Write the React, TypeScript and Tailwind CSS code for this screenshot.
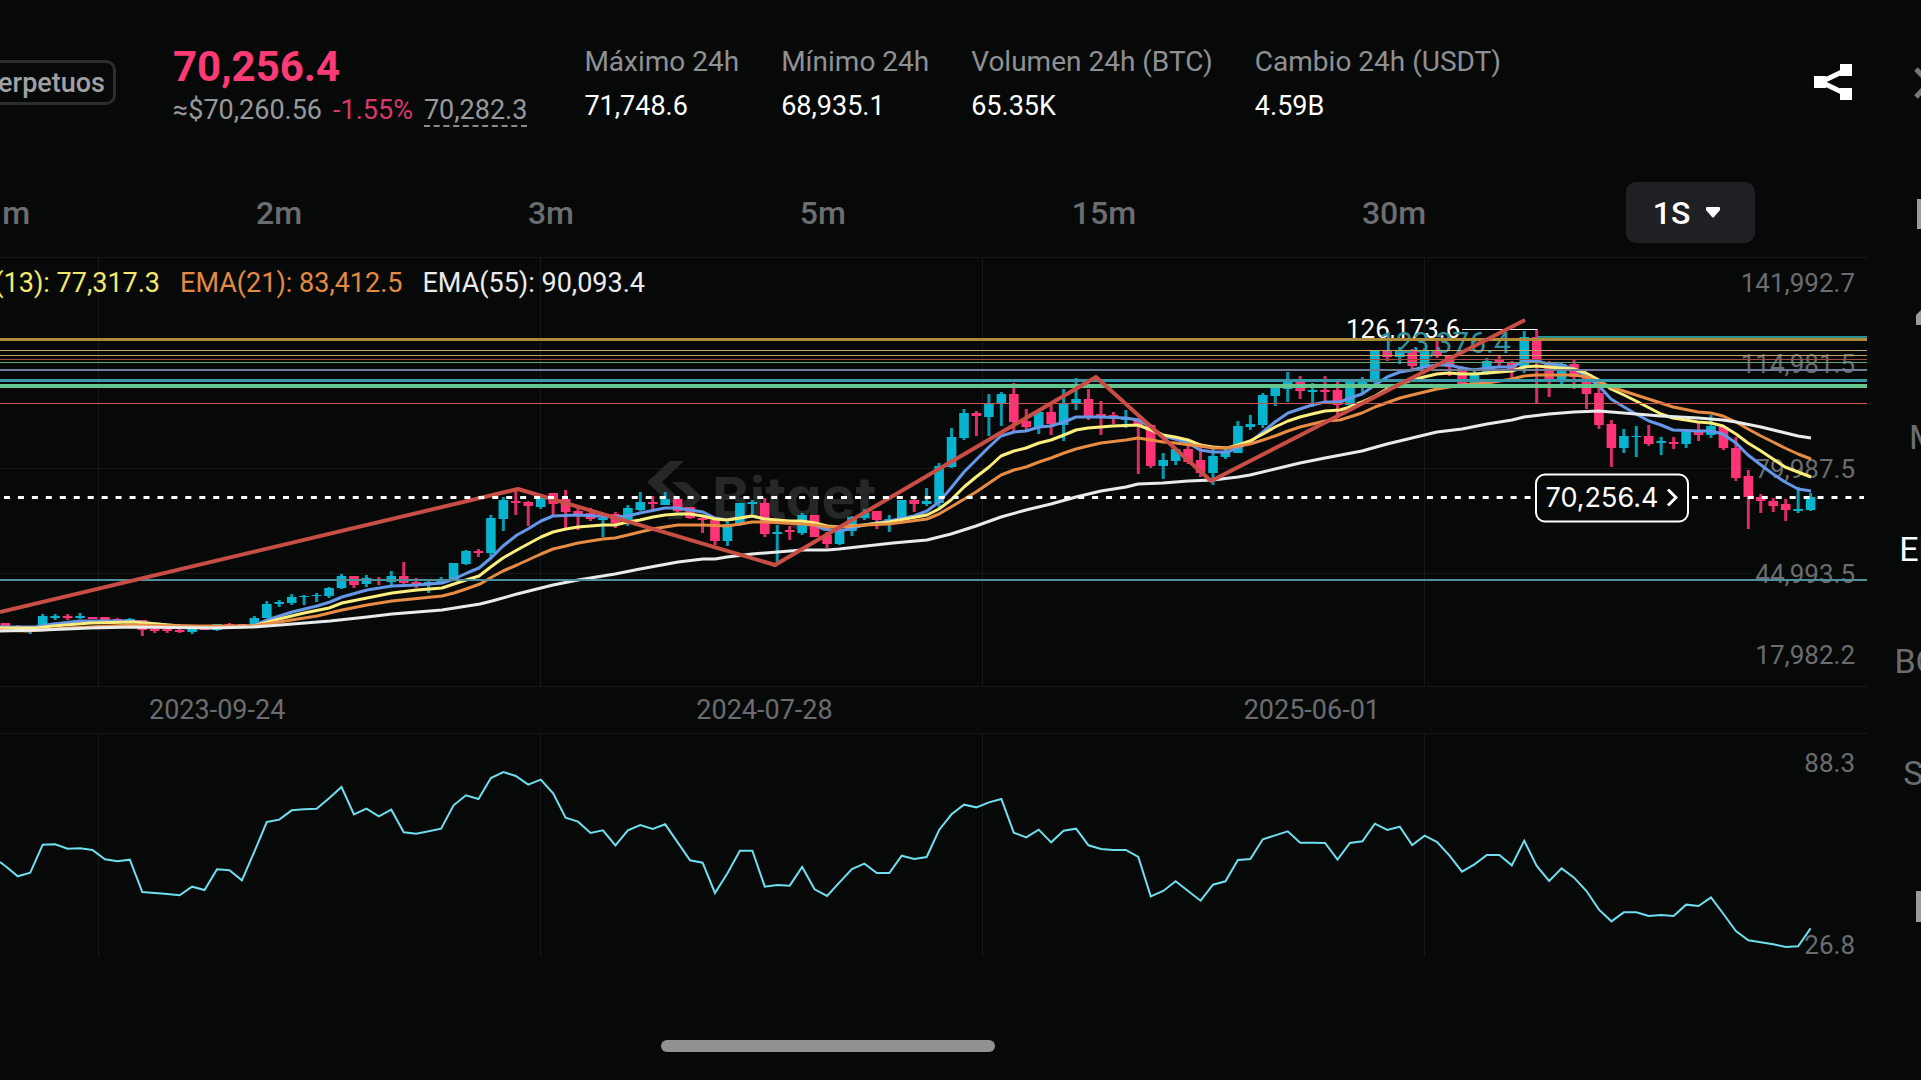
import { useState } from 'react'

type Candle = [dir: 'u' | 'd', high: number, top: number, bottom: number, low: number]

const STEP = 12.45
const X0 = 5.35

const UP = '#06b4cf'
const DOWN = '#ff3376'

// [direction, high, body top, body bottom, low]
const candles: Candle[] = [
  ['d', 623, 623, 626, 627], ['d', 625, 626, 628, 630], ['u', 626, 628, 630, 634],
  ['u', 614, 616, 625, 626], ['u', 614, 616, 618, 620], ['d', 614, 616, 618, 620], ['u', 613, 616, 618, 619],
  ['d', 617, 617, 619, 619], ['d', 617, 617, 620, 620], ['d', 618, 619, 621, 621], ['u', 618, 619, 621, 621],
  ['d', 620, 620, 630, 636], ['d', 628, 629, 631, 633], ['d', 628, 629, 631, 633], ['d', 628, 630, 632, 633],
  ['u', 627, 629, 632, 634], ['d', 627, 628, 630, 630], ['u', 624, 624, 630, 631], ['d', 623, 624, 627, 628],
  ['d', 624, 624, 628, 629], ['u', 616, 618, 625, 625], ['u', 601, 604, 618, 618], ['u', 600, 602, 604, 607],
  ['u', 594, 597, 603, 605], ['u', 595, 596, 597, 605], ['u', 593, 595, 596, 602], ['u', 587, 588, 596, 598],
  ['u', 574, 576, 588, 589], ['d', 576, 576, 585, 588], ['u', 575, 578, 584, 587], ['d', 577, 579, 581, 585],
  ['u', 571, 576, 582, 585], ['d', 562, 576, 583, 584], ['d', 578, 582, 584, 588], ['u', 580, 582, 584, 593],
  ['u', 577, 580, 582, 584], ['u', 563, 563, 580, 580], ['u', 550, 551, 564, 565], ['d', 549, 551, 553, 557],
  ['u', 515, 518, 553, 557], ['u', 497, 500, 519, 531], ['d', 490, 501, 503, 515], ['d', 501, 502, 506, 526],
  ['u', 496, 498, 507, 509], ['d', 493, 493, 504, 515], ['d', 490, 499, 512, 528], ['d', 507, 511, 514, 530],
  ['d', 508, 513, 519, 521], ['u', 515, 518, 520, 537], ['d', 512, 514, 523, 528], ['u', 505, 508, 520, 526],
  ['u', 492, 502, 510, 511], ['d', 496, 502, 504, 509], ['u', 492, 499, 505, 505], ['d', 497, 499, 511, 512],
  ['d', 507, 507, 518, 519], ['d', 517, 518, 520, 533], ['d', 520, 520, 541, 545], ['u', 522, 524, 541, 546],
  ['u', 503, 503, 525, 526], ['u', 500, 502, 504, 514], ['d', 498, 503, 534, 537], ['u', 525, 532, 534, 563],
  ['d', 526, 530, 532, 540], ['u', 513, 515, 533, 535], ['d', 515, 515, 537, 537], ['d', 532, 535, 544, 548],
  ['u', 527, 529, 544, 545], ['u', 516, 517, 531, 536], ['u', 509, 513, 518, 520], ['d', 511, 511, 520, 529],
  ['u', 515, 519, 520, 532], ['u', 500, 500, 519, 519], ['d', 499, 500, 504, 512], ['u', 488, 501, 504, 506],
  ['u', 463, 466, 503, 508], ['u', 428, 437, 467, 468], ['u', 409, 413, 438, 440], ['d', 411, 413, 416, 436],
  ['u', 394, 404, 417, 436], ['u', 392, 394, 404, 426], ['d', 383, 394, 422, 431], ['d', 409, 421, 427, 430],
  ['u', 411, 412, 427, 434], ['d', 403, 412, 424, 435], ['u', 389, 404, 425, 441], ['u', 378, 399, 403, 410],
  ['d', 389, 399, 416, 420], ['d', 401, 414, 416, 435], ['d', 412, 415, 418, 424], ['u', 410, 418, 420, 428],
  ['d', 418, 419, 426, 474], ['d', 424, 425, 466, 468], ['u', 453, 460, 466, 479], ['u', 448, 449, 461, 465],
  ['d', 446, 449, 462, 464], ['d', 443, 460, 473, 477], ['u', 448, 456, 473, 485], ['u', 448, 452, 457, 459],
  ['u', 421, 426, 453, 453], ['u', 415, 424, 427, 430], ['u', 393, 395, 425, 428], ['u', 387, 388, 396, 406],
  ['u', 372, 379, 389, 402], ['d', 376, 381, 391, 399], ['u', 383, 390, 392, 407], ['d', 376, 390, 392, 401],
  ['d', 382, 390, 405, 415], ['u', 382, 382, 405, 407], ['u', 377, 382, 384, 393], ['u', 350, 350, 381, 385],
  ['d', 350, 351, 357, 361], ['u', 347, 350, 357, 364], ['d', 349, 350, 366, 369], ['u', 348, 350, 367, 367],
  ['d', 339, 350, 356, 358], ['d', 355, 356, 367, 376], ['d', 366, 367, 384, 384], ['u', 368, 373, 383, 385],
  ['u', 358, 361, 373, 375], ['d', 355, 360, 362, 366], ['d', 361, 362, 369, 382], ['u', 331, 337, 367, 373],
  ['d', 329, 337, 361, 403], ['d', 361, 362, 382, 397], ['u', 362, 364, 382, 388], ['d', 359, 364, 377, 389],
  ['d', 377, 378, 394, 409], ['d', 387, 393, 425, 429], ['d', 420, 424, 448, 467], ['u', 429, 436, 448, 453],
  ['u', 426, 436, 437, 457], ['d', 425, 436, 444, 446], ['u', 437, 441, 443, 455], ['d', 437, 442, 444, 449],
  ['u', 432, 432, 444, 448], ['d', 423, 432, 435, 441], ['u', 415, 426, 435, 438], ['d', 426, 427, 448, 450],
  ['d', 437, 448, 478, 481], ['d', 470, 476, 497, 529], ['d', 494, 497, 501, 513], ['d', 498, 501, 506, 512],
  ['d', 499, 504, 510, 521], ['u', 487, 509, 511, 513], ['u', 493, 497, 510, 511],
]

const ema8 =
  '0,627 35,627 53,624 80,621 130,621 167,625 200,627 253,626 267,620 292,612 317,606 330,602 342,597 367,590 392,586 417,585 442,583 454,579 467,573 479,568 492,557 503,546 517,535 528,529 541,521 553,516 578,515 615,517 628,516 640,513 665,508 678,508 690,510 703,512 715,518 727,520 740,518 752,516 765,519 790,522 802,522 815,525 823,529 840,531 853,528 864,525 889,521 914,516 927,511 939,502 951,488 964,472 976,460 989,447 1001,436 1014,432 1026,431 1039,427 1051,426 1064,422 1076,417 1101,417 1126,418 1138,420 1151,427 1163,436 1175,439 1188,443 1200,450 1213,452 1227,452 1238,448 1250,442 1263,432 1275,422 1288,413 1300,409 1312,405 1325,402 1340,402 1350,398 1362,394 1375,385 1387,377 1400,372 1412,370 1424,367 1437,365 1449,365 1462,368 1474,370 1487,368 1499,367 1512,367 1524,361 1536,361 1549,364 1561,365 1574,369 1586,376 1599,386 1611,399 1624,407 1636,414 1649,421 1661,425 1673,430 1698,431 1711,431 1723,434 1736,443 1748,455 1761,465 1773,474 1785,482 1798,489 1811,491'
const ema13 =
  '0,628 37,628 53,626 90,623 133,622 157,624 180,626 217,627 253,626 279,619 304,613 329,608 342,603 367,598 392,593 417,590 442,588 454,584 466,580 479,576 492,566 503,558 517,550 528,544 541,537 553,532 566,529 578,527 603,525 615,525 628,522 640,520 653,517 665,515 678,514 690,514 703,516 715,519 727,520 740,518 752,516 765,519 790,521 802,521 815,523 827,526 839,527 864,525 889,522 927,515 939,509 951,500 964,487 976,477 989,467 1001,456 1014,451 1026,448 1039,443 1051,440 1064,435 1076,430 1088,428 1113,426 1138,425 1151,430 1163,435 1175,437 1188,440 1200,445 1213,447 1227,448 1238,445 1250,441 1263,434 1275,427 1288,421 1300,417 1312,414 1325,411 1340,410 1350,407 1362,402 1375,396 1387,389 1400,384 1412,380 1424,377 1437,374 1449,373 1462,374 1474,374 1487,373 1512,371 1524,367 1536,366 1561,368 1574,369 1586,373 1599,380 1611,389 1624,395 1636,401 1661,414 1673,418 1686,420 1698,422 1711,423 1723,426 1736,434 1748,443 1761,451 1773,459 1785,467 1798,472 1811,477'
const ema21 =
  '0,630 27,631 67,628 133,625 180,626 253,626 279,622 317,616 342,610 367,605 392,601 442,596 454,593 466,589 480,584 492,577 503,571 517,565 541,554 553,549 566,546 578,543 603,539 615,538 628,535 640,532 653,529 665,527 678,525 703,525 727,526 740,524 752,522 765,522 802,524 815,525 827,527 839,527 864,525 889,524 927,519 939,514 951,507 976,492 1001,475 1014,470 1026,467 1039,462 1051,458 1064,453 1076,449 1088,446 1101,443 1126,440 1138,438 1151,440 1163,442 1175,443 1200,446 1213,448 1227,448 1250,444 1263,440 1275,436 1288,431 1300,427 1325,421 1340,420 1362,413 1375,407 1400,398 1412,395 1437,389 1462,385 1487,383 1512,379 1524,376 1536,375 1561,375 1574,375 1587,377 1599,382 1611,387 1636,395 1661,403 1673,407 1698,412 1711,413 1723,416 1736,422 1748,429 1761,436 1773,442 1785,448 1798,454 1811,459'
const ema55 =
  '0,631 43,630 90,628 133,627 213,628 253,627 280,625 330,621 367,617 392,614 442,610 480,604 492,601 517,594 541,588 553,585 578,580 615,574 640,569 678,562 703,559 715,559 727,557 752,554 802,550 827,550 839,549 893,543 927,540 951,534 976,526 1001,517 1026,510 1051,504 1076,497 1101,491 1126,487 1138,484 1163,483 1188,481 1213,480 1238,477 1250,475 1275,469 1300,463 1325,458 1362,451 1387,444 1412,438 1437,432 1462,429 1487,424 1512,420 1524,417 1549,414 1574,412 1599,411 1611,412 1661,416 1698,418 1723,420 1736,422 1761,427 1798,436 1811,438'

const levels = [
  { y: 339, h: 3, color: '#ac8a38' },
  { y: 350, h: 1, color: '#c2a866' },
  { y: 355, h: 1, color: '#c99f68' },
  { y: 359, h: 1, color: '#9c5048' },
  { y: 362, h: 1, color: '#68a376' },
  { y: 370, h: 2, color: '#707c98' },
  { y: 380, h: 3, color: '#3a97a7' },
  { y: 386, h: 4, color: '#62c68e' },
  { y: 403, h: 1, color: '#c9564f' },
  { y: 580, h: 2, color: '#4f909c' },
]

const rsi = [
  438, 469, 458, 374, 373, 386, 385, 390, 418, 424, 419, 516, 519, 522, 526, 500, 510, 448, 451, 481, 395, 306, 299,
  271, 268, 266, 235, 201, 283, 266, 289, 269, 337, 341, 334, 326, 256, 226, 237, 174, 156, 168, 194, 179, 220, 293,
  305, 339, 331, 376, 331, 315, 327, 313, 367, 421, 428, 519, 460, 392, 392, 500, 495, 497, 441, 508, 528, 487, 447,
  431, 459, 459, 407, 417, 411, 330, 283, 254, 262, 247, 237, 338, 352, 329, 367, 332, 326, 376, 387, 390, 390, 411,
  529, 513, 484, 513, 542, 494, 484, 420, 417, 358, 346, 334, 368, 368, 369, 419, 369, 364, 311, 330, 320, 375, 347,
  366, 407, 455, 433, 405, 405, 436, 362, 438, 483, 445, 473, 513, 569, 604, 577, 577, 588, 585, 588, 554, 558, 532,
  582, 633, 661, 667, 673, 681, 679, 625,
]

const priceLabels = [
  { y: 292, text: '141,992.7' },
  { y: 373, text: '114,981.5' },
  { y: 478, text: '79,987.5' },
  { y: 583, text: '44,993.5' },
  { y: 664, text: '17,982.2' },
]

const gridX = [98.5, 540.5, 982.5, 1424.5]

const stats = [
  { label: 'Máximo 24h', value: '71,748.6' },
  { label: 'Mínimo 24h', value: '68,935.1' },
  { label: 'Volumen 24h (BTC)', value: '65.35K' },
  { label: 'Cambio 24h (USDT)', value: '4.59B' },
]

const intervals = ['1m', '2m', '3m', '5m', '15m', '30m']
const indicators = ['MA', 'EMA', 'BOLL', 'SAR']

const Header = () => (
  <header className="flex h-[168px] items-start overflow-hidden">
    <div className="mt-[60px] flex w-[116px] shrink-0 justify-end overflow-hidden">
      <span className="h-[45px] rounded-[10px] border-[3px] border-[#2c2d31] px-2 text-[27px] font-medium leading-10 text-[#a0a1a5]">
        Perpetuos
      </span>
    </div>

    <div className="ml-[57px] mt-[43px] shrink-0">
      <div className="text-[42px] font-bold leading-[48px] text-[#fb3a76]">70,256.4</div>
      <div className="mt-1 flex gap-[11px] text-[27px] leading-[30px] text-[#97989c]">
        <span>≈$70,260.56</span>
        <span className="text-[#d63a6c]">-1.55%</span>
        <span className="border-b-2 border-dashed border-[#8a8b8f]">70,282.3</span>
      </div>
    </div>

    <dl className="ml-[57px] mt-[46px] flex shrink-0 gap-[42px] leading-8">
      {stats.map((s) => (
        <div key={s.label}>
          <dt className="text-[28px] text-[#8f9094]">{s.label}</dt>
          <dd className="mt-3 text-[27px] text-white">{s.value}</dd>
        </div>
      ))}
    </dl>

    <div className="ml-auto mt-[62px] flex w-[108px] shrink-0 gap-[61px] overflow-hidden">
      <button aria-label="Compartir" className="shrink-0">
        <svg width="40" height="40" viewBox="0 0 40 40" fill="#fff">
          <path d="M8 20 33 8M8 20l25 12" stroke="#fff" strokeWidth="5" />
          <path d="M1 14h12v12H1zM27 2h12v12H27zM27 26h12v12H27z" />
        </svg>
      </button>
      <button aria-label="Cerrar" className="shrink-0">
        <svg width="40" height="40" viewBox="0 0 40 40" fill="none" stroke="#77787c" strokeWidth="5">
          <path d="M2 7l26 28M28 7 2 35" />
        </svg>
      </button>
    </div>
  </header>
)

const Watermark = () => (
  <g fill="#262727">
    <path d="M670 461h14l-22 21 21 21h-14l-22-21zM672 482h14l16 15-21 22h-14l22-22z" />
    <text x="712" y="518" fontSize="57" fontWeight="700" fontFamily="Inter, sans-serif">
      Bitget
    </text>
  </g>
)

const PriceChart = () => (
  <svg viewBox="0 258 1867 428" className="block h-auto w-full" fill="none">
    <g stroke="#16191b">
      {gridX.map((x) => (
        <path key={x} d={`M${x} 258V686`} />
      ))}
      <path d="M0 468.5H1752M0 573.5H1752" />
    </g>
    <Watermark />

    <g fill="#6b6c70" fontSize="26" textAnchor="end">
      {priceLabels.map((l) => (
        <text key={l.text} x="1855" y={l.y}>
          {l.text}
        </text>
      ))}
    </g>

    {candles.map(([dir, high, top, bottom, low], i) => {
      const x = X0 + i * STEP
      return (
        <g key={i} fill={dir === 'u' ? UP : DOWN}>
          <rect x={x - 1.5} y={high} width="3" height={low - high} opacity="0.85" />
          <rect x={x - 4.8} y={top} width="9.6" height={Math.max(bottom - top, 1)} />
        </g>
      )
    })}

    <g strokeWidth="3" strokeLinejoin="round">
      <polyline points={ema8} stroke="#6597e8" />
      <polyline points={ema13} stroke="#fbee7c" />
      <polyline points={ema21} stroke="#e88b43" />
      <polyline points={ema55} stroke="#e9eaea" />
    </g>

    <path d="M1462 329.5H1537" stroke="#fff" />
    <text x="1346" y="338" fontSize="26" fill="#fff">
      126,173.6
    </text>
    <text x="1379" y="353" fontSize="30" fill="#2f93a2">
      123,376.4
    </text>

    <path d="M1537 337H1867" stroke="#2b8f96" strokeWidth="2" />
    {levels.map((l) => (
      <rect key={l.y} y={l.y - Math.floor(l.h / 2)} width="1867" height={l.h} fill={l.color} />
    ))}

    <polyline
      points="0,612 518,489 775,565 1096,377 1211,481 1525,320"
      stroke="#c84d45"
      strokeWidth="4"
      strokeLinejoin="round"
    />
    <path d="M4 497.5H1534M1692 497.5H1864" stroke="#fff" strokeWidth="3" strokeDasharray="6 7.95" />
  </svg>
)

const RsiChart = () => (
  <svg viewBox="0 734 1867 223" className="block h-auto w-full" fill="none">
    <g stroke="#16191b">
      {gridX.map((x) => (
        <path key={x} d={`M${x} 734V957`} />
      ))}
    </g>
    <g fill="#6b6c70" fontSize="26" textAnchor="end">
      <text x="1855" y="772">88.3</text>
      <text x="1855" y="954">26.8</text>
    </g>
    <polyline
      points={rsi.map((v, i) => `${X0 + i * STEP},${720 + v / 3}`).join(' ')}
      stroke="#6fdeee"
      strokeWidth="2"
    />
    <path d={`M0 862L${X0} 866`} stroke="#6fdeee" strokeWidth="2" />
  </svg>
)

const App = () => {
  const [active, setActive] = useState('EMA')

  return (
    <div className="min-h-screen overflow-hidden bg-[#070908] font-['Roboto',sans-serif]">
      <Header />

      <div className="grid grid-cols-[minmax(0,1fr)_54px]">
        <main>
          <nav className="-ml-4 flex items-center justify-between border-b border-[#16191b] py-[14px] pr-[112px] text-[32px] font-medium text-[#6c6d71]">
            {intervals.map((t) => (
              <button key={t}>{t}</button>
            ))}
            <button className="-ml-[26px] flex h-[61px] w-[129px] items-center justify-center gap-4 rounded-[10px] bg-[#1f2024] pr-2 text-white">
              1S
              <svg width="14" height="11" viewBox="0 0 14 11" fill="#fff">
                <path d="M0 1Q0 0 1 0h12q1 0 1 1v2L8 10q-1 1-2 0L0 3z" />
              </svg>
            </button>
          </nav>

          <div className="relative">
            <PriceChart />
            <div className="absolute left-0 top-[9px] flex w-[645px] justify-end gap-5 whitespace-nowrap text-[27px] leading-8">
              <span className="text-[#f3e86f]">EMA(13): 77,317.3</span>
              <span className="text-[#e48a42]">EMA(21): 83,412.5</span>
              <span className="text-[#ececec]">EMA(55): 90,093.4</span>
            </div>
            <button className="absolute right-[178px] top-[56%] flex h-[49px] w-[154px] -translate-y-1/2 items-center justify-center gap-2 rounded-[10px] border-2 border-white bg-[#070908] font-['Inter',sans-serif] text-[27px] text-white">
              70,256.4
              <svg width="12" height="18" viewBox="0 0 12 18" fill="none" stroke="#fff" strokeWidth="3">
                <path d="M2 1l8 8-8 8" />
              </svg>
            </button>
          </div>

          <div className="flex h-[48px] items-center gap-[411px] border-y border-[#16191b] pl-[149px] text-[27px] text-[#6b6c70]">
            <time>2023-09-24</time>
            <time>2024-07-28</time>
            <time>2025-06-01</time>
          </div>

          <RsiChart />
        </main>

        <aside className="overflow-hidden">
          <div className="flex w-[136px] flex-col items-center text-[34px] text-[#6c6d71]">
            <button aria-label="Vista" className="mt-[31px]">
              <svg width="36" height="30" viewBox="0 0 36 30" fill="none" stroke="#9a9b9f" strokeWidth="5">
                <path d="M2 2h32v26H2z" />
              </svg>
            </button>
            <button aria-label="Dibujar" className="mt-[64px]">
              <svg width="38" height="32" viewBox="0 0 38 32" fill="#9a9b9f">
                <path d="M0 32V22L22 0l10 10-22 22z" />
              </svg>
            </button>
            <div className="mt-[56px] flex flex-col items-center">
              {indicators.map((name) => (
                <button
                  key={name}
                  onClick={() => setActive(name)}
                  className={active === name ? 'h-28 text-white' : 'h-28'}
                >
                  {name}
                </button>
              ))}
            </div>
            <button aria-label="Indicadores" className="mt-[62px]">
              <svg width="38" height="31" viewBox="0 0 38 31" fill="#9a9b9f">
                <path d="M0 0h38v31H0z" />
              </svg>
            </button>
          </div>
        </aside>
      </div>

      <div className="ml-[34.4%] mt-[83px] h-3 w-[17.4%] rounded-full bg-[#909290]" />
    </div>
  )
}

export default App
